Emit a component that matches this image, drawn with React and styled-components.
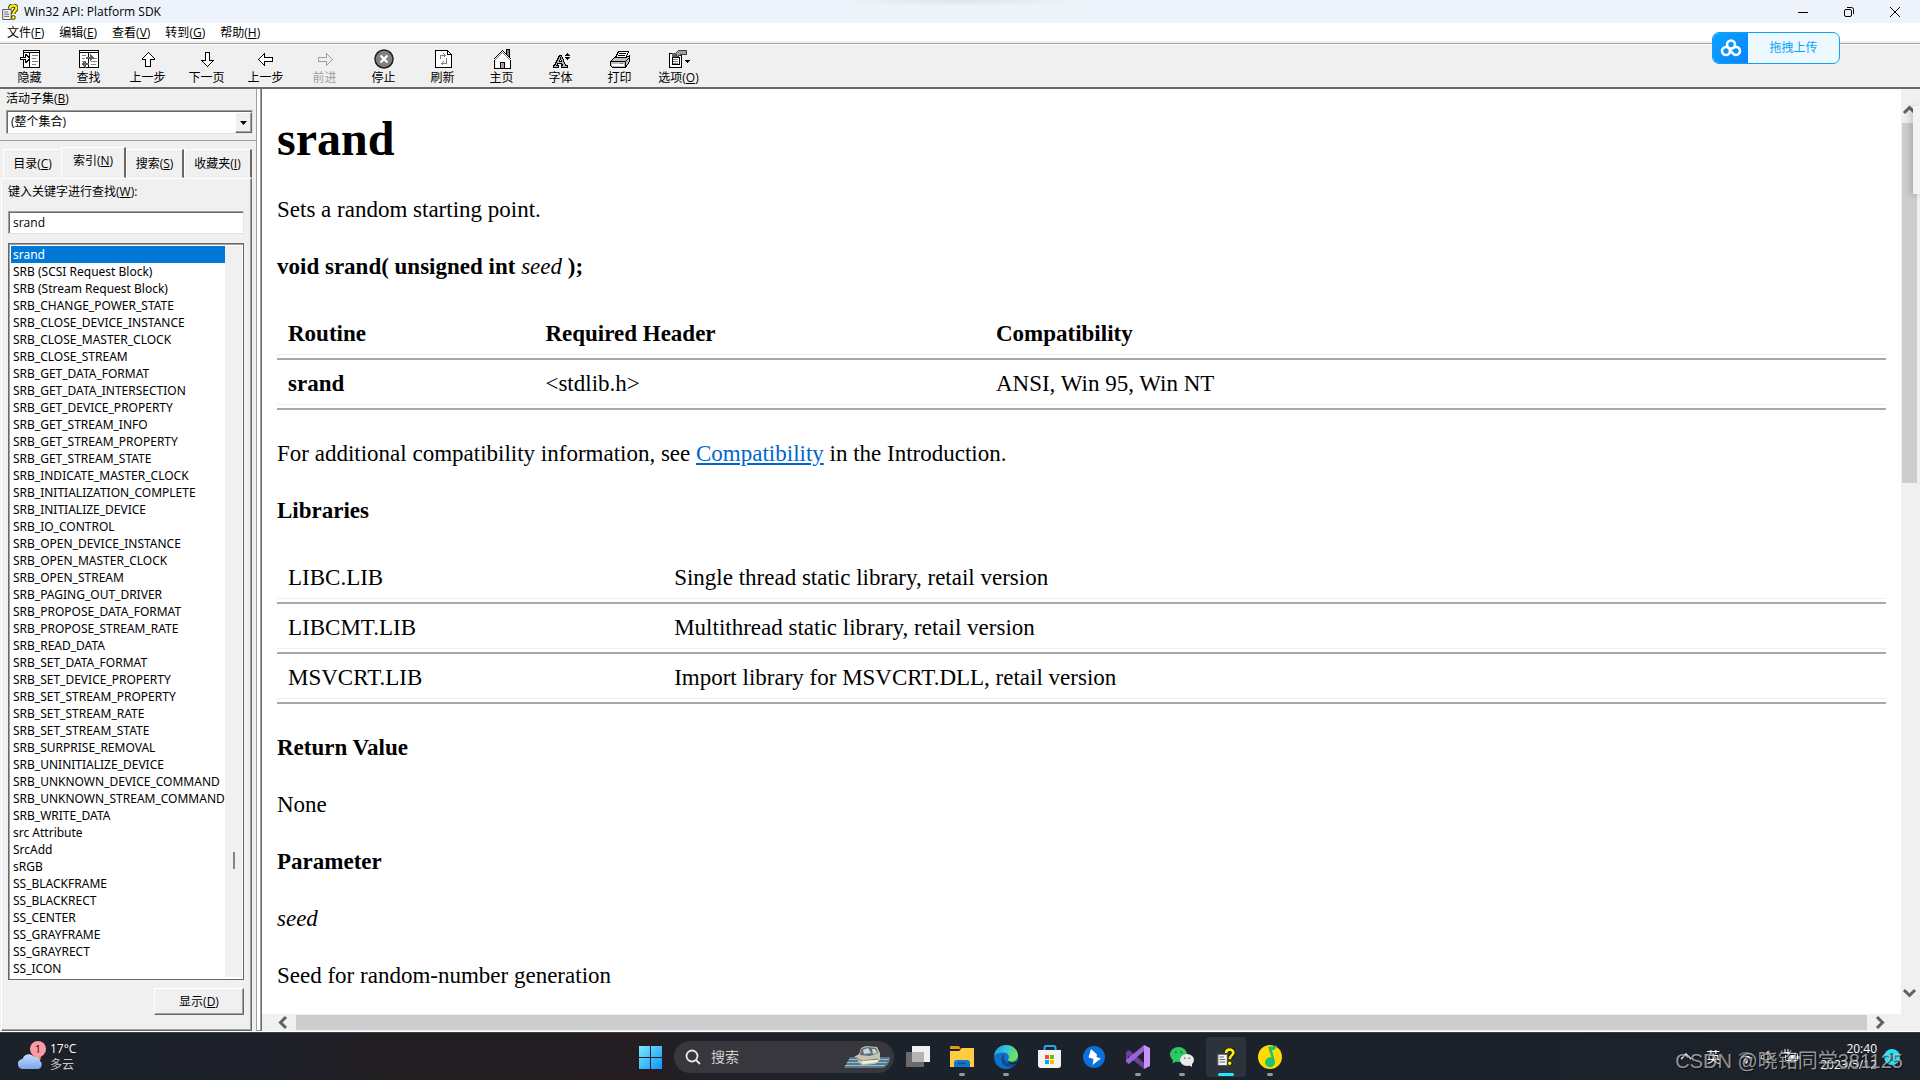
import React from "react";
import styled, { createGlobalStyle, css } from "styled-components";

const TOPICS = [
  "srand",
  "SRB (SCSI Request Block)",
  "SRB (Stream Request Block)",
  "SRB_CHANGE_POWER_STATE",
  "SRB_CLOSE_DEVICE_INSTANCE",
  "SRB_CLOSE_MASTER_CLOCK",
  "SRB_CLOSE_STREAM",
  "SRB_GET_DATA_FORMAT",
  "SRB_GET_DATA_INTERSECTION",
  "SRB_GET_DEVICE_PROPERTY",
  "SRB_GET_STREAM_INFO",
  "SRB_GET_STREAM_PROPERTY",
  "SRB_GET_STREAM_STATE",
  "SRB_INDICATE_MASTER_CLOCK",
  "SRB_INITIALIZATION_COMPLETE",
  "SRB_INITIALIZE_DEVICE",
  "SRB_IO_CONTROL",
  "SRB_OPEN_DEVICE_INSTANCE",
  "SRB_OPEN_MASTER_CLOCK",
  "SRB_OPEN_STREAM",
  "SRB_PAGING_OUT_DRIVER",
  "SRB_PROPOSE_DATA_FORMAT",
  "SRB_PROPOSE_STREAM_RATE",
  "SRB_READ_DATA",
  "SRB_SET_DATA_FORMAT",
  "SRB_SET_DEVICE_PROPERTY",
  "SRB_SET_STREAM_PROPERTY",
  "SRB_SET_STREAM_RATE",
  "SRB_SET_STREAM_STATE",
  "SRB_SURPRISE_REMOVAL",
  "SRB_UNINITIALIZE_DEVICE",
  "SRB_UNKNOWN_DEVICE_COMMAND",
  "SRB_UNKNOWN_STREAM_COMMAND",
  "SRB_WRITE_DATA",
  "src Attribute",
  "SrcAdd",
  "sRGB",
  "SS_BLACKFRAME",
  "SS_BLACKRECT",
  "SS_CENTER",
  "SS_GRAYFRAME",
  "SS_GRAYRECT",
  "SS_ICON"
];

const MENUS = [
  ["文件", "F"],
  ["编辑", "E"],
  ["查看", "V"],
  ["转到", "G"],
  ["帮助", "H"]
];

const TABS = [
  ["目录", "C"],
  ["索引", "N"],
  ["搜索", "S"],
  ["收藏夹", "I"]
];

const LIBRARIES = [
  ["LIBC.LIB", "Single thread static library, retail version"],
  ["LIBCMT.LIB", "Multithread static library, retail version"],
  ["MSVCRT.LIB", "Import library for MSVCRT.DLL, retail version"]
];

const Hotkey = ({ text, letter }) => (
  <>
    {text}({<u>{letter}</u>})
  </>
);

/* ---------- toolbar icons ---------- */

const Pixel = ({ children, w = 20 }) => (
  <svg
    width={w}
    height="20"
    viewBox={`0 0 ${w} 20`}
    shapeRendering="crispEdges"
    fill="none"
    stroke="#000"
    aria-hidden="true"
  >
    {children}
  </svg>
);

const HideIcon = () => (
  <Pixel>
    <path d="M3.5 1.5h16v17h-16z" fill="#fff" />
    <path d="M3 3.5h17M9.5 4v15" />
    <path d="M12 6.5h6M12 9.5h4M12 12.5h6M12 15.5h4" stroke="#808080" />
    <path d="M.5 8.5h5v-3h1v1h1v1h1v1h1v2h-1v1h-1v1h-1v1h-1v-3h-5z" fill="#fff" />
  </Pixel>
);

const LocateIcon = () => (
  <Pixel>
    <path d="M.5 1.5h19v17H.5z" fill="#fff" />
    <path d="M0 3.5h20M9.5 4v15" />
    <path d="M3 6.5h4M3 9.5h3M3 12.5h3M12 9.5h6M12 12.5h6M12 15.5h5" stroke="#808080" />
    <path d="M7 8h4V5l5 4-5 3v-2H7z" fill="#606060" stroke="none" />
    <path d="M10 14H7v-2l-5 3 5 4v-3h3z" fill="#606060" stroke="none" />
  </Pixel>
);

const ARROWS = {
  up: "M10.5 3.5l-6 6v1h3v7h5v-7h4v-1z",
  down: "M8.5 3.5h4v8h4l-6 6-6-6h4z",
  left: "M2.5 10.5l6-6v4h8v4h-8v4z",
  right: "M17.5 10.5l-6-6v4h-8v4h8v4z"
};

const ArrowIcon = ({ dir }) => (
  <Pixel>
    <path
      d={ARROWS[dir]}
      fill={dir === "right" ? "#f0f0f0" : "#fff"}
      stroke={dir === "right" ? "#a0a0a0" : "#000"}
    />
  </Pixel>
);

const StopIcon = () => (
  <svg width="20" height="20" viewBox="0 0 20 20" aria-hidden="true">
    <circle cx="10" cy="10" r="9" fill="#808080" stroke="#202020" strokeWidth="1.5" />
    <path d="M6.5 6.5l7 7M13.5 6.5l-7 7" stroke="#fff" strokeWidth="2.4" />
  </svg>
);

const RefreshIcon = () => (
  <Pixel>
    <path d="M2.5 1.5h12l4 4v13h-16z" fill="#fff" />
    <path d="M14.5 1.5v4h4" />
    <path d="M7.5 10V6.5h5M10.5 4.5l2 2-2 2M13.5 9v5.5h-5M10.5 12.5l-2 2 2 2" stroke="#808080" />
  </Pixel>
);

const HomeIcon = () => (
  <Pixel>
    <path d="M3.5 10.5h14v8h-14z" fill="#fff" stroke="none" />
    <path d="M10.5 2.5l8 8h-16z" fill="#fff" stroke="none" />
    <path d="M14.5 5V.5h3V8" fill="#808080" />
    <path d="M1.5 10.5l9-9 9 9" />
    <path d="M2.5 11.5l8-8 8 8" stroke="#808080" />
    <path d="M2.5 11v8h16v-8" />
    <path d="M8.5 18.5v-5h4v5" fill="#a0a0a0" />
  </Pixel>
);

const FontIcon = () => (
  <Pixel>
    <path d="M2.5 18.5v-2h1l5-10h2l4 10h2v2h-6v-2h1l-1-2H7l-1 2h1v2z" fill="#b0b0b0" />
    <path d="M8.5 12.5l1-3 1 3z" fill="#fff" />
    <path d="M14 7h5l-2.5-3zM14 8h5l-2.5 3z" fill="#000" stroke="none" />
  </Pixel>
);

const PrintIcon = () => (
  <Pixel>
    <path d="M5.5 8.5l3-6h10l-3 7" fill="#fff" />
    <path d="M9 4.5h7M8 6.5h7" />
    <path d="M.5 12.5l4-4h12l3-2v6l-4 6h-13l-2-2z" fill="#c0c0c0" />
    <path d="M1 12.5h14v6M15.5 12.5l4-4" />
    <path d="M2 14.5h12v2H2z" fill="#fff" stroke="none" />
    <path d="M10 14.5h3" stroke="#808080" />
  </Pixel>
);

const OptionsIcon = () => (
  <Pixel w={22}>
    <path d="M1.5 4.5h12v14h-12z" fill="#fff" />
    <path d="M4 8.5h7v7H4z" fill="#fff" />
    <path d="M5 10.5h5M5 12.5h5M5 14.5h5" stroke="#808080" />
    <path d="M4 4h5v4H4z" fill="#606060" stroke="none" />
    <path d="M7.5 4.5l3-3h8v4h-5l-4 2z" fill="#a0a0a0" stroke="#404040" />
    <path d="M17 11h5l-2.5 3z" fill="#000" stroke="none" />
  </Pixel>
);

const HelpBookIcon = ({ size = 16 }) => (
  <svg width={size} height={size} viewBox="0 0 16 16" aria-hidden="true">
    <path d="M.7 5.5h8.5v10H.7z" fill="#f4f4f4" stroke="#555" />
    <path d="M2.2 8h4M2.2 10.2h5M2.2 12.4h5" stroke="#666" />
    <path
      d="M8 4.5c0-4 6.5-4 6.5-.5 0 2.5-3.2 2.7-3.2 6"
      fill="none"
      stroke="#111"
      strokeWidth="4"
    />
    <path
      d="M8 4.5c0-4 6.5-4 6.5-.5 0 2.5-3.2 2.7-3.2 6"
      fill="none"
      stroke="#ffee00"
      strokeWidth="2.4"
    />
    <circle cx="11.3" cy="13.5" r="2" fill="#ffee00" stroke="#111" strokeWidth=".8" />
  </svg>
);

const TOOLS = [
  { label: "隐藏", icon: <HideIcon /> },
  { label: "查找", icon: <LocateIcon /> },
  { label: "上一步", icon: <ArrowIcon dir="up" /> },
  { label: "下一页", icon: <ArrowIcon dir="down" /> },
  { label: "上一步", icon: <ArrowIcon dir="left" /> },
  { label: "前进", icon: <ArrowIcon dir="right" />, disabled: true },
  { label: "停止", icon: <StopIcon /> },
  { label: "刷新", icon: <RefreshIcon /> },
  { label: "主页", icon: <HomeIcon /> },
  { label: "字体", icon: <FontIcon /> },
  { label: "打印", icon: <PrintIcon /> },
  { label: "选项", letter: "O", icon: <OptionsIcon /> }
];

const CHEVRONS = {
  up: "M3 11l5.5-5.5L14 11",
  down: "M3 6l5.5 5.5L14 6",
  left: "M11 3L5.5 8.5 11 14",
  right: "M6 3l5.5 5.5L6 14"
};

const Chevron = ({ dir }) => (
  <svg width="17" height="17" viewBox="0 0 17 17" aria-hidden="true">
    <path d={CHEVRONS[dir]} fill="none" stroke="#606060" strokeWidth="3" />
  </svg>
);

const NetdiskIcon = () => (
  <svg width="22" height="18" viewBox="0 0 22 18" fill="none" aria-hidden="true">
    <g stroke="#fff" strokeWidth="2.6">
      <circle cx="11" cy="5.5" r="4" />
      <circle cx="6" cy="12" r="4" />
      <path d="M12.5 10a4 4 0 1 1 .2 4.2L9.5 10.5" />
    </g>
  </svg>
);

/* ---------- taskbar icons ---------- */

const WeatherIcon = () => (
  <svg width="32" height="32" viewBox="0 0 32 32" aria-hidden="true">
    <defs>
      <linearGradient id="cloud" x2="0" y2="1">
        <stop offset="0" stopColor="#c4dcff" />
        <stop offset="1" stopColor="#7ba6ea" />
      </linearGradient>
    </defs>
    <circle cx="19" cy="16" r="4" fill="#f58a1f" />
    <path d="M5 28a5 5 0 0 1-.5-10C6 13 13 11.5 16 16c4-1 6 1 6 4 3 2 2 8-2 8z" fill="url(#cloud)" />
    <circle cx="20" cy="8" r="8" fill="#ff99a4" />
    <text x="20" y="12" textAnchor="middle" fontSize="11" fontFamily="Open Sans, sans-serif" fill="#111">
      1
    </text>
  </svg>
);

const StartIcon = () => (
  <svg width="23" height="23" viewBox="0 0 23 23" aria-hidden="true">
    <defs>
      <linearGradient id="win" x2="1" y2="1">
        <stop offset="0" stopColor="#7ee9ff" />
        <stop offset="1" stopColor="#0a95f5" />
      </linearGradient>
    </defs>
    <path d="M0 0h11v11H0zM12 0h11v11H12zM0 12h11v11H0zM12 12h11v11H12z" fill="url(#win)" />
  </svg>
);

const SearchIcon = () => (
  <svg width="16" height="16" viewBox="0 0 16 16" fill="none" aria-hidden="true">
    <circle cx="7" cy="7" r="5.5" stroke="#e8e8e8" strokeWidth="1.8" />
    <path d="M11 11l4 4" stroke="#e8e8e8" strokeWidth="1.8" />
  </svg>
);

const CarIcon = () => (
  <svg width="48" height="24" viewBox="0 0 48 24" aria-hidden="true">
    <path d="M7 12h40c0 6-4 11-9 11H1z" fill="#56798f" />
    <path d="M6 14.5h40M4 17.5h40M2 20.5h40" stroke="#9db9c8" />
    <path d="M11 12l5-3 2-6 5-2 11 1 3 6v7l-5 4-13 1-4-3v-4z" fill="#c4c4b0" />
    <path d="M18 4l6-2 9 1 2 5-8 3-10-1z" fill="#5f6f78" />
    <path d="M20 5l5-2 3 5-7 1zM29 4h3l2 4-4 1z" fill="#c9d6da" />
    <path d="M13 13l6 3 16-2" stroke="#78806e" fill="none" />
    <path d="M18 16l17-1v2l-15 2z" fill="#efefdf" />
  </svg>
);

const TaskViewIcon = () => (
  <svg width="24" height="24" viewBox="0 0 24 24" aria-hidden="true">
    <path d="M6 1h18v16H6z" fill="#f1f1f1" />
    <path d="M0 7h18v15H0z" fill="#6a6a6a" />
    <path d="M6 7h12v10H6z" fill="#b5b5b5" />
  </svg>
);

const ExplorerIcon = () => (
  <svg width="24" height="24" viewBox="0 0 24 24" aria-hidden="true">
    <path d="M0 2a1 1 0 0 1 1-1h8l2 3H0z" fill="#e29a0b" />
    <path d="M0 6h9l3-3h12v19H0z" fill="#ffcb40" />
    <path d="M4 22v-4a3 3 0 0 1 3-3h10a3 3 0 0 1 3 3v4z" fill="#0f78cf" />
    <path d="M8 18.5h8" stroke="#0b4f91" strokeWidth="1.5" />
  </svg>
);

const EdgeIcon = () => (
  <svg width="24" height="24" viewBox="0 0 24 24" aria-hidden="true">
    <defs>
      <linearGradient id="edgeTop" x2="1" y2=".4">
        <stop offset="0" stopColor="#1e8fe0" />
        <stop offset=".5" stopColor="#35c1e0" />
        <stop offset="1" stopColor="#6fe05a" />
      </linearGradient>
    </defs>
    <circle cx="12" cy="12" r="12" fill="#1270c4" />
    <path d="M0 11C1 4 6 0 12 0c7 0 12 5 12 10.5 0 3.5-3 6-6.5 6-3 0-4-1.200-3.5-2 2.5-3.5-.5-7-4.5-7C5 7.5 1 9 0 11z" fill="url(#edgeTop)" />
    <path d="M9.5 9C5 13 8 22 15 22c3 0 6-1.5 7-3.5 1-1-.5-1-1-.7-6 2.700-11-1-11-5.300z" fill="#0c4a94" />
    <path d="M14 14c-.5 2 1.500 3.500 4 3.500 2 0 4-.6 5.300-2l-1.300 3c-5 2-9 0-8-4.500z" fill="#1c222b" />
  </svg>
);

const StoreIcon = () => (
  <svg width="24" height="24" viewBox="0 0 24 24" aria-hidden="true">
    <path d="M6.5 7V3a2 2 0 0 1 2-2h7a2 2 0 0 1 2 2v4" fill="none" stroke="#27a8ea" strokeWidth="2" />
    <path d="M0 5h23v15a3 3 0 0 1-3 3H3a3 3 0 0 1-3-3z" fill="#f3f3f3" />
    <path d="M7 10h4v4H7z" fill="#f25022" />
    <path d="M12 10h4v4h-4z" fill="#7fba00" />
    <path d="M7 15h4v4H7z" fill="#00a4ef" />
    <path d="M12 15h4v4h-4z" fill="#ffb900" />
  </svg>
);

const ThunderIcon = () => (
  <svg width="24" height="24" viewBox="0 0 24 24" aria-hidden="true">
    <circle cx="12" cy="12" r="11" fill="#0c6fdb" />
    <path d="M9 4l6 5.500-.5 2.500 4.500 1.500L10.500 20l1-6L6.500 12.500z" fill="#fff" />
  </svg>
);

const StudioIcon = () => (
  <svg width="24" height="24" viewBox="0 0 24 24" aria-hidden="true">
    <path d="M0 7l3-2 15 13v6L2 11v5l-2 1z" fill="#6b4196" />
    <path d="M0 17l3 2L18 6V0L0 15z" fill="#9a63d6" />
    <path d="M18 0l6 3v18l-6 3z" fill="#c595fb" />
  </svg>
);

const ChatIcon = () => (
  <svg width="26" height="24" viewBox="0 0 26 24" aria-hidden="true">
    <ellipse cx="9.5" cy="9.5" rx="8.5" ry="7.5" fill="#2bc864" />
    <path d="M4 14l-.5 4.500L8 16z" fill="#2bc864" />
    <ellipse cx="18" cy="15" rx="7" ry="6" fill="#e9e9e9" />
    <path d="M20 20l3 2v-4z" fill="#e9e9e9" />
    <path d="M6 6.5h1.600v1.600H6zM11.500 6.500h1.600v1.600h-1.600z" fill="#14602f" />
    <path d="M15 12.5h1.500V14H15zM19.500 12.500H21V14h-1.500z" fill="#777" />
  </svg>
);

const MusicIcon = () => (
  <svg width="24" height="24" viewBox="0 0 24 24" aria-hidden="true">
    <circle cx="12" cy="12" r="12" fill="#ffdc00" />
    <path d="M10 2l9-1.500c-1 3.500-3 4.500-5 5l3 11a5 5 0 1 1-3.500-4z" fill="#1fbf74" />
  </svg>
);

const APPS = [
  { name: "任务视图", icon: <TaskViewIcon /> },
  { name: "文件资源管理器", icon: <ExplorerIcon />, open: true },
  { name: "Edge", icon: <EdgeIcon />, open: true },
  { name: "Store", icon: <StoreIcon /> },
  { name: "迅雷", icon: <ThunderIcon /> },
  { name: "Visual Studio", icon: <StudioIcon />, open: true },
  { name: "微信", icon: <ChatIcon />, open: true },
  { name: "Platform SDK", icon: <HelpBookIcon size={18} />, active: true },
  { name: "QQ音乐", icon: <MusicIcon />, open: true }
];

export default function App() {
  return (
    <Desktop>
      <GlobalStyle />
      <TitleBar>
        <HelpBookIcon />
        <Title>Win32 API: Platform SDK</Title>
        <WindowButton aria-label="最小化">
          <svg width="12" height="12" viewBox="0 0 12 12" stroke="#000" shapeRendering="crispEdges">
            <path d="M1 6.5h10" />
          </svg>
        </WindowButton>
        <WindowButton aria-label="还原">
          <svg width="12" height="12" viewBox="0 0 12 12" stroke="#000" fill="none">
            <rect x="1.5" y="3.5" width="7" height="7" rx="1.5" />
            <path d="M4 1.5h4.500a2 2 0 0 1 2 2V8" />
          </svg>
        </WindowButton>
        <WindowButton aria-label="关闭">
          <svg width="12" height="12" viewBox="0 0 12 12" stroke="#000">
            <path d="M1 1l10 10M11 1L1 11" />
          </svg>
        </WindowButton>
      </TitleBar>
      <MenuBar>
        {MENUS.map(([text, letter]) => (
          <MenuItem key={letter}>
            <Hotkey text={text} letter={letter} />
          </MenuItem>
        ))}
      </MenuBar>
      <Toolbar>
        {TOOLS.map((tool, index) => (
          <ToolButton key={index} disabled={tool.disabled}>
            {tool.icon}
            <span>
              {tool.letter ? (
                <Hotkey text={tool.label} letter={tool.letter} />
              ) : (
                tool.label
              )}
            </span>
          </ToolButton>
        ))}
      </Toolbar>
      <Workspace>
        <Navigation>
          <Subset>
            <label htmlFor="subset">
              <Hotkey text="活动子集" letter="B" />
            </label>
            <SelectBox>
              <select id="subset">
                <option>(整个集合)</option>
              </select>
              <SelectArrow aria-hidden="true">
                <svg width="7" height="4" viewBox="0 0 7 4">
                  <path d="M0 0h7L3.500 4z" />
                </svg>
              </SelectArrow>
            </SelectBox>
          </Subset>
          <Tabs role="tablist">
            {TABS.map(([text, letter]) => (
              <Tab
                key={letter}
                role="tab"
                aria-selected={letter === "N"}
                $active={letter === "N"}
                $wide={text.length > 2}
              >
                <Hotkey text={text} letter={letter} />
              </Tab>
            ))}
          </Tabs>
          <IndexPanel>
            <label htmlFor="keyword">
              <Hotkey text="键入关键字进行查找" letter="W" />:
            </label>
            <KeywordInput id="keyword" defaultValue="srand" />
            <ListFrame>
              <TopicList role="listbox" aria-label="索引">
                {TOPICS.map((topic, index) => (
                  <Topic key={topic} role="option" aria-selected={index === 0} $selected={index === 0}>
                    {topic}
                  </Topic>
                ))}
              </TopicList>
              <ListTrack>
                <ListThumb />
              </ListTrack>
            </ListFrame>
            <DisplayButton>
              <Hotkey text="显示" letter="D" />
            </DisplayButton>
          </IndexPanel>
        </Navigation>
        <Splitter />
        <Viewer>
          <Article>
            <h1>srand</h1>
            <p>Sets a random starting point.</p>
            <p>
              <b>void srand( unsigned int</b> <i>seed</i> <b>);</b>
            </p>
            <DocTable>
              <colgroup>
                <Col $width="16%" />
                <Col $width="28%" />
                <Col $width="56%" />
              </colgroup>
              <thead>
                <tr>
                  <th>Routine</th>
                  <th>Required Header</th>
                  <th>Compatibility</th>
                </tr>
              </thead>
              <tbody>
                <tr>
                  <td>
                    <b>srand</b>
                  </td>
                  <td>&lt;stdlib.h&gt;</td>
                  <td>ANSI, Win 95, Win NT</td>
                </tr>
              </tbody>
            </DocTable>
            <p>
              For additional compatibility information, see{" "}
              <a href="#compatibility">Compatibility</a> in the Introduction.
            </p>
            <h4>Libraries</h4>
            <DocTable>
              <colgroup>
                <Col $width="24%" />
                <Col $width="76%" />
              </colgroup>
              <tbody>
                {LIBRARIES.map(([name, description]) => (
                  <tr key={name}>
                    <td>{name}</td>
                    <td>{description}</td>
                  </tr>
                ))}
              </tbody>
            </DocTable>
            <h4>Return Value</h4>
            <p>None</p>
            <h4>Parameter</h4>
            <p>
              <i>seed</i>
            </p>
            <p>Seed for random-number generation</p>
          </Article>
          <VerticalBar>
            <Chevron dir="up" />
            <VerticalTrack>
              <VerticalThumb />
            </VerticalTrack>
            <Chevron dir="down" />
          </VerticalBar>
          <HorizontalBar>
            <Chevron dir="left" />
            <HorizontalThumb />
            <Chevron dir="right" />
          </HorizontalBar>
          <EdgeHandle />
        </Viewer>
      </Workspace>
      <Taskbar>
        <Weather>
          <WeatherIcon />
          <div>
            <div>17°C</div>
            <Condition>多云</Condition>
          </div>
        </Weather>
        <AppRow>
          <AppButton aria-label="开始">
            <StartIcon />
          </AppButton>
          <TaskSearch>
            <SearchIcon />
            <input placeholder="搜索" aria-label="搜索" />
            <CarIcon />
          </TaskSearch>
          {APPS.map(app => (
            <AppButton key={app.name} aria-label={app.name} $open={app.open} $active={app.active}>
              {app.icon}
            </AppButton>
          ))}
        </AppRow>
        <Tray>
          <svg width="12" height="12" viewBox="0 0 12 12" fill="none" stroke="#fff" strokeWidth="1.5">
            <path d="M1 8l5-5 5 5" />
          </svg>
          <Ime>英</Ime>
          <TrayStatus>
            <svg width="16" height="16" viewBox="0 0 16 16" fill="none" stroke="#fff" strokeWidth="1.3">
              <path d="M1 6.500a10 10 0 0 1 14 0" stroke="#777" />
              <path d="M3.500 9a6.500 6.500 0 0 1 9 0M6 11.500a3 3 0 0 1 4 0" />
              <circle cx="8" cy="13" r="1" fill="#fff" />
            </svg>
            <svg width="16" height="16" viewBox="0 0 16 16" fill="none" stroke="#fff">
              <path d="M1.500 6v4H4l4 3.500v-11L4 6zM10.500 6a3 3 0 0 1 0 4" />
              <path d="M12.500 4a6 6 0 0 1 0 8" stroke="#777" />
            </svg>
            <svg width="18" height="16" viewBox="0 0 18 16" fill="none" stroke="#fff">
              <path d="M4.500 4.500h10a1 1 0 0 1 1 1v5a1 1 0 0 1-1 1h-10a1 1 0 0 1-1-1V6M17 7v3" />
              <path d="M8 6.500h6v3.500H6z" fill="#fff" />
              <path d="M3 0v3M6 0v3M1.500 3.500h6" />
            </svg>
          </TrayStatus>
          <Clock>
            <div>20:40</div>
            <div>2023/5/12</div>
          </Clock>
          <Notice>1</Notice>
        </Tray>
        <Watermark>CSDN @晓铭同学381125</Watermark>
      </Taskbar>
      <UploadPill>
        <UploadLogo>
          <NetdiskIcon />
        </UploadLogo>
        <UploadText>拖拽上传</UploadText>
      </UploadPill>
    </Desktop>
  );
}

const UI_FONT = `"Open Sans", "Noto Sans CJK SC", sans-serif`;
const LIST_FONT = `"Noto Sans", "Noto Sans CJK SC", sans-serif`;

const GlobalStyle = createGlobalStyle`
  * {
    box-sizing: border-box;
  }
  body {
    margin: 0;
    background: #f0f0f0;
    color: #000;
    font: 12px/16px ${UI_FONT};
  }
  button, input, select {
    margin: 0;
    padding: 0;
    border: 0;
    border-radius: 0;
    background: none;
    color: inherit;
    font: inherit;
  }
`;

const sunken = css`
  border: 1px solid;
  border-color: #a0a0a0 #e3e3e3 #e3e3e3 #a0a0a0;
  box-shadow: inset 1px 1px #696969;
`;

const raised = css`
  background: #f0f0f0;
  border: 1px solid;
  border-color: #fff #696969 #696969 #fff;
  box-shadow: inset -1px -1px #a0a0a0;
`;

const Desktop = styled.div`
  position: relative;
  display: flex;
  flex-direction: column;
  min-height: 100vh;
`;

const TitleBar = styled.header`
  display: flex;
  align-items: center;
  height: 23px;
  padding: 0 2px;
  background: radial-gradient(120px 6px at 50% 0, #dde3e5, #eef3fb);
`;

const Title = styled.div`
  flex: 1;
  padding-left: 6px;
`;

const WindowButton = styled.button`
  display: flex;
  align-items: center;
  justify-content: center;
  width: 46px;
  height: 20px;
`;

const MenuBar = styled.nav`
  display: flex;
  gap: 15px;
  height: 21px;
  padding-left: 7px;
  background: #fff;
  border-bottom: 1px solid #a0a0a0;
  box-shadow: inset 0 -2px #f0f0f0;
`;

const MenuItem = styled.button`
  height: 20px;
`;

const Toolbar = styled.div`
  display: flex;
  height: 45px;
  padding-top: 4px;
  border-top: 1px solid #fff;
  border-bottom: 2px solid #696969;
`;

const ToolButton = styled.button`
  display: flex;
  flex-direction: column;
  align-items: center;
  gap: 1px;
  width: 59px;
  color: ${({ disabled }) => (disabled ? "#a0a0a0" : "#000")};
`;

const Workspace = styled.main`
  flex: 1;
  display: flex;
  border-bottom: 1px solid #fff;
`;

const Navigation = styled.aside`
  display: flex;
  flex-direction: column;
  width: 256px;
  flex: none;
`;

const Subset = styled.div`
  display: flex;
  flex-direction: column;
  gap: 3px;
  padding: 2px 3px 6px 6px;
  border-bottom: 1px solid #a0a0a0;
`;

const SelectBox = styled.div`
  position: relative;
  display: flex;
  height: 24px;
  background: #fff;
  ${sunken}

  select {
    flex: 1;
    appearance: none;
    padding-left: 4px;
  }
`;

const SelectArrow = styled.span`
  position: absolute;
  top: 1px;
  right: 0;
  bottom: 0;
  display: flex;
  align-items: center;
  justify-content: center;
  width: 17px;
  pointer-events: none;
  ${raised}
`;

const Tabs = styled.div`
  display: flex;
  align-items: flex-end;
  height: 37px;
  padding-left: 3px;
`;

const Tab = styled.button`
  width: ${({ $wide, $active }) => ($wide ? 68 : $active ? 65 : 58)}px;
  height: ${({ $active }) => ($active ? 31 : 29)}px;
  padding-bottom: ${({ $active }) => ($active ? 4 : 0)}px;
  border: 1px solid;
  border-color: #fff ${({ $active }) => ($active ? "#696969" : "#a0a0a0")}
    transparent #fff;

  &:nth-child(n + 2) {
    border-right: 2px solid #696969;
  }
  &:first-child {
    border-right: 0;
  }
`;

const IndexPanel = styled.section`
  flex: 1;
  display: flex;
  flex-direction: column;
  margin: 0 4px 0 1px;
  padding: 5px 7px 15px 6px;
  border: 1px solid;
  border-color: #fff #696969 #696969 #fff;
  box-shadow: inset -1px -1px #a0a0a0;
`;

const KeywordInput = styled.input`
  width: 100%;
  height: 23px;
  margin: 11px 0 9px;
  padding-left: 4px;
  background: #fff;
  ${sunken}
`;

const ListFrame = styled.div`
  flex: 1;
  display: flex;
  padding: 2px 1px 2px 2px;
  background: #fff;
  border: 1px solid #696969;
  box-shadow: inset 1px 1px #a0a0a0;
`;

const TopicList = styled.ul`
  flex: 1;
  min-width: 0;
  margin: 0;
  padding: 0;
  list-style: none;
  font-family: ${LIST_FONT};
`;

const Topic = styled.li`
  overflow: hidden;
  padding-left: 2px;
  line-height: 17px;
  white-space: nowrap;
  ${({ $selected }) =>
    $selected &&
    css`
      background: #0078d7;
      color: #fff;
    `}
`;

const ListTrack = styled.div`
  display: flex;
  justify-content: center;
  align-items: flex-end;
  width: 17px;
  padding-bottom: 108px;
  background: #f0f0f0;
`;

const ListThumb = styled.div`
  width: 2px;
  height: 17px;
  background: #858585;
`;

const DisplayButton = styled.button`
  align-self: flex-end;
  width: 90px;
  height: 27px;
  margin-top: 8px;
  ${raised}
`;

const Splitter = styled.div`
  width: 5px;
  border: 1px solid #a0a0a0;
  border-top: 0;
  background: #fff;
`;

const Viewer = styled.section`
  position: relative;
  flex: 1;
  min-width: 0;
  display: grid;
  grid-template-columns: 1fr 17px;
  grid-template-rows: 1fr 17px;
  padding-right: 2px;
  border-left: 1px solid #696969;
`;

const Article = styled.article`
  min-width: 0;
  padding: 23px 15px 0;
  background: #fff;
  font-family: "Liberation Serif", serif;
  font-size: 23px;
  line-height: 27px;

  h1 {
    margin: 0 0 30px;
    font-size: 48px;
    line-height: 54px;
  }
  p,
  h4 {
    margin: 0 0 30px;
    font-size: 23px;
  }
  p:last-child {
    margin-bottom: 0;
  }
  a {
    color: #0066cc;
  }
`;

const DocTable = styled.table`
  width: 100%;
  margin-bottom: 30px;
  border-collapse: separate;
  border-spacing: 0;
  table-layout: fixed;

  th,
  td {
    height: 50px;
    padding: 0 11px 2px;
    text-align: left;
    border-bottom: 2px solid #a8a8a8;
    box-shadow: inset 0 -3px #fff, inset 0 -4px #f0f0f0;
  }
`;

const Col = styled.col`
  width: ${({ $width }) => $width};
`;

const VerticalBar = styled.div`
  display: flex;
  flex-direction: column;
  gap: 4px;
  padding: 13px 0;
  background: #f0f0f0;
`;

const VerticalTrack = styled.div`
  flex: 1;
`;

const VerticalThumb = styled.div`
  width: 15px;
  height: 42%;
  margin-left: 1px;
  background: #cdcdcd;
`;

const HorizontalBar = styled.div`
  grid-column: 1 / -1;
  display: flex;
  gap: 4px;
  padding: 0 30px 0 13px;
  background: #f0f0f0;
`;

const HorizontalThumb = styled.div`
  flex: 1;
  height: 15px;
  margin-top: 1px;
  background: #cdcdcd;
`;

const EdgeHandle = styled.div`
  position: absolute;
  top: 17px;
  right: 0;
  width: 7px;
  height: 88px;
  background: #f3f3f3;
  box-shadow: -2px 1px 7px rgba(0, 0, 0, 0.2);
`;

const Taskbar = styled.footer`
  position: relative;
  display: grid;
  grid-template-columns: 1fr auto 1fr;
  align-items: center;
  height: 49px;
  border-top: 1px solid #3a3d44;
  background: linear-gradient(
    90deg,
    #1c212a 0%,
    #1d2028 14%,
    #231f23 20%,
    #241e23 34%,
    #1b222b 46%,
    #1d222b 100%
  );
  color: #fff;
`;

const Weather = styled.div`
  display: flex;
  align-items: center;
  padding-left: 18px;
`;

const Condition = styled.div`
  color: #c8c8c8;
`;

const AppRow = styled.div`
  display: flex;
  align-items: center;
`;

const AppButton = styled.button`
  position: relative;
  display: flex;
  align-items: center;
  justify-content: center;
  width: 40px;
  height: 40px;
  margin: 0 2px;
  border-radius: 4px;
  ${({ $active }) => $active && "background: #2d323b;"}

  &::after {
    content: "";
    position: absolute;
    bottom: 1px;
    display: ${({ $open, $active }) => ($open || $active ? "block" : "none")};
    width: ${({ $active }) => ($active ? 16 : 6)}px;
    height: 3px;
    border-radius: 2px;
    background: ${({ $active }) => ($active ? "#26e8fb" : "#9a9a9a")};
  }
`;

const TaskSearch = styled.label`
  display: flex;
  align-items: center;
  gap: 10px;
  width: 220px;
  height: 32px;
  margin: 0 2px;
  padding: 0 3px 0 11px;
  border-radius: 16px;
  background: #37373d;

  input {
    flex: 1;
    min-width: 0;
    font-size: 14px;
  }
  input::placeholder {
    color: #d0d0d0;
    opacity: 1;
  }
`;

const Tray = styled.div`
  display: flex;
  align-items: center;
  justify-content: flex-end;
  padding-right: 20px;
`;

const Ime = styled.span`
  margin: 0 18px 0 14px;
  font-size: 14px;
`;

const TrayStatus = styled.div`
  display: flex;
  gap: 6px;
  margin-right: 20px;
`;

const Clock = styled.div`
  text-align: right;
`;

const Notice = styled.span`
  width: 16px;
  height: 16px;
  margin-left: 7px;
  border-radius: 50%;
  background: #22e6f8;
  color: #134;
  font-size: 11px;
  text-align: center;
`;

const Watermark = styled.div`
  position: absolute;
  right: 17px;
  bottom: 6px;
  font: 20px/28px "Liberation Sans", "Noto Sans CJK SC", sans-serif;
  color: rgba(205, 205, 205, 0.7);
  text-shadow: 1px 1px 1px rgba(0, 0, 0, 0.6);
`;

const UploadPill = styled.button`
  position: absolute;
  top: 32px;
  right: 80px;
  display: flex;
  width: 128px;
  height: 32px;
  overflow: hidden;
  border: 1px solid #12a0f0;
  border-radius: 7px;
  background: #edf8ff;
`;

const UploadLogo = styled.span`
  display: flex;
  align-items: center;
  justify-content: center;
  width: 35px;
  height: 100%;
  background: linear-gradient(135deg, #0aa4ff, #0784ff);
`;

const UploadText = styled.span`
  flex: 1;
  line-height: 30px;
  color: #0aa2f8;
`;
